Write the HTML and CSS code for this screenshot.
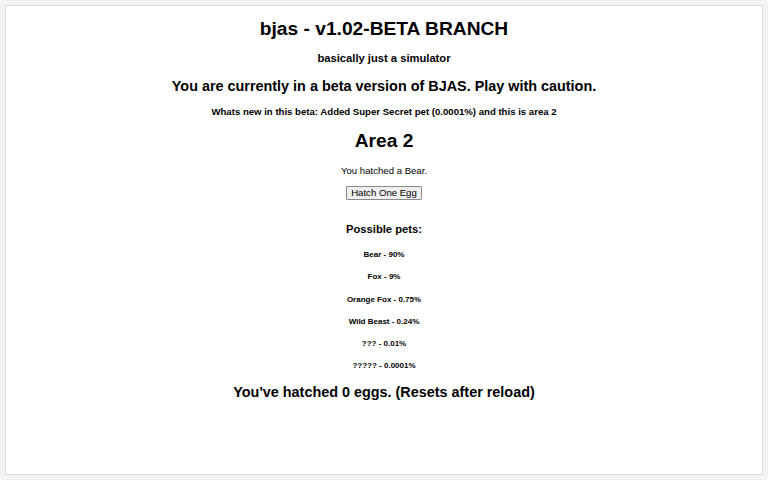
FILE: index.html
```html
<!DOCTYPE html>
<html lang="en">
<head>
<meta charset="utf-8">
<title>bjas - v1.02-BETA BRANCH</title>
<link rel="stylesheet" href="styles.css">
</head>
<body>
<div class="page">
  <h1 class="title">bjas - v1.02-BETA BRANCH</h1>
  <h3 class="subtitle">basically just a simulator</h3>
  <h2 class="warning">You are currently in a beta version of BJAS. Play with caution.</h2>
  <h4 class="news">Whats new in this beta: Added Super Secret pet (0.0001%) and this is area 2</h4>
  <h1 class="area">Area 2</h1>
  <p class="result">You hatched a Bear.</p>
  <p class="actions"><button class="hatch" type="button">Hatch One Egg</button></p>
  <h3 class="pets-title">Possible pets:</h3>
  <h5 class="pet">Bear - 90%</h5>
  <h5 class="pet">Fox - 9%</h5>
  <h5 class="pet">Orange Fox - 0.75%</h5>
  <h5 class="pet">Wild Beast - 0.24%</h5>
  <h5 class="pet">??? - 0.01%</h5>
  <h5 class="pet">????? - 0.0001%</h5>
  <h2 class="count">You've hatched 0 eggs. (Resets after reload)</h2>
</div>
</body>
</html>
```
FILE: styles.css
```css
html {
  background: #f3f3f3;
}
body {
  margin: 0;
  font-family: "Liberation Sans", Arial, sans-serif;
  font-size: 9.6px;
  color: #000;
}
.page {
  box-sizing: border-box;
  margin: 5px;
  height: 470px;
  background: #fff;
  border: 1px solid #dedede;
  text-align: center;
  overflow: hidden;
}
.title {
  font-size: 19.2px;
  margin: 11.5px 0 12.8px;
}
.subtitle {
  font-size: 11.2px;
  margin: 11.2px 0;
}
.warning {
  font-size: 14.4px;
  margin: 14.2px 0 11.2px;
}
.news {
  font-size: 9.6px;
  margin: 11.8px 0 11px;
}
.area {
  font-size: 19.2px;
  margin: 13px 0 12.8px;
}
.result {
  margin: 9.6px 0;
}
.actions {
  margin: 9.6px 0 23px;
}
.hatch {
  font-family: "Liberation Sans", Arial, sans-serif;
  font-size: 9.6px;
  line-height: 11px;
  padding: 0.6px 4px;
  color: #000;
  background: #efefef;
  border: 1px solid #8a8a8a;
  border-radius: 1px;
}
.pets-title {
  font-size: 11.2px;
  margin: 0 0 15.3px;
}
.pet {
  font-size: 8px;
  margin: 13.2px 0;
}
.count {
  font-size: 14.4px;
  margin: 14.3px 0 12px;
}
```
